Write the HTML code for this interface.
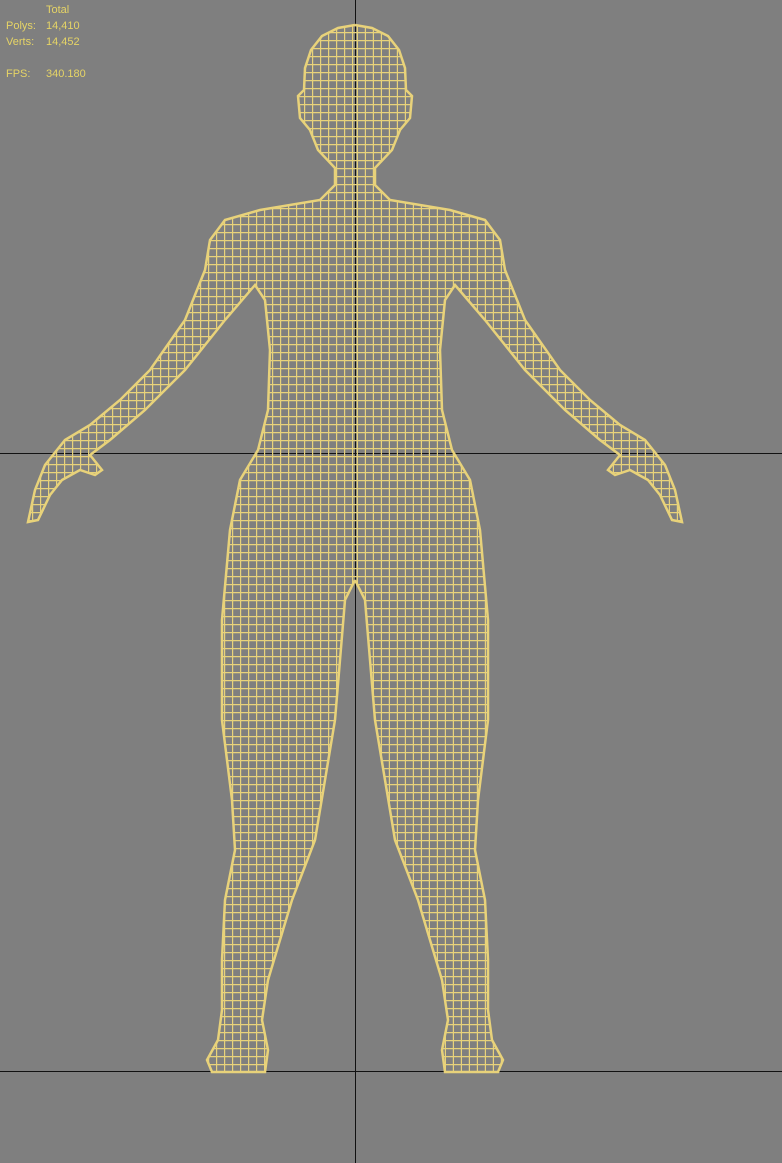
<!DOCTYPE html>
<html><head><style>
html,body{margin:0;padding:0;background:#7f7f7f;}
.t{position:absolute;font:11px "Liberation Sans",sans-serif;color:#e6d466;line-height:12px;}
</style></head><body>
<div style="position:relative;width:782px;height:1163px;overflow:hidden;background:#7f7f7f">
<svg width="782" height="1163" style="position:absolute;left:0;top:0">
<defs>
<pattern id="g" width="8" height="8" patternUnits="userSpaceOnUse">
<path d="M0 .5H8M.5 0V8" stroke="#e8d27a" stroke-width="1.4" fill="none"/>
</pattern>
<path id="h" d="M355 25 L338 28 L322 36 L311 50 L305 68 L304 90 L298 96 L300 118 L310 130 L318 150 L335 168 L335 185 L320 200 L260 210 L225 220 L210 240 L205 270 L185 320 L150 370 L120 400 L90 425 L65 440 L45 465 L35 490 L28 522 L38 520 L50 495 L62 480 L80 470 L95 475 L102 470 L90 455 L110 440 L145 410 L185 370 L225 320 L255 285 L265 300 L270 350 L268 410 L258 450 L240 480 L230 530 L222 620 L222 720 L232 800 L235 850 L225 900 L222 960 L222 1010 L218 1040 L207 1060 L212 1072 L265 1072 L268 1050 L262 1020 L268 980 L292 900 L315 840 L335 720 L345 600 L355 580"/>
</defs>
<line x1="355.5" y1="0" x2="355.5" y2="1163" stroke="#111" stroke-width="1"/>
<line x1="0" y1="453.5" x2="782" y2="453.5" stroke="#111" stroke-width="1"/>
<line x1="0" y1="1071.5" x2="782" y2="1071.5" stroke="#111" stroke-width="1"/>
<use href="#h" fill="url(#g)"/>
<g transform="translate(710,0) scale(-1,1)"><use href="#h" fill="url(#g)"/></g>
<use href="#h" fill="none" stroke="#e8d27a" stroke-width="2.5"/>
<g transform="translate(710,0) scale(-1,1)"><use href="#h" fill="none" stroke="#e8d27a" stroke-width="2.5"/></g>
</svg>
<div class="t" style="left:46px;top:4px">Total</div>
<div class="t" style="left:6px;top:20px">Polys:</div><div class="t" style="left:46px;top:20px">14,410</div>
<div class="t" style="left:6px;top:36px">Verts:</div><div class="t" style="left:46px;top:36px">14,452</div>
<div class="t" style="left:6px;top:68px">FPS:</div><div class="t" style="left:46px;top:68px">340.180</div>
</div>
</body></html>
